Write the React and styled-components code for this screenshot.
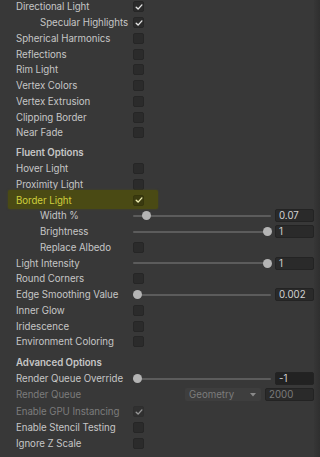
import React from "react";
import styled, { createGlobalStyle, css } from "styled-components";

const GlobalStyle = createGlobalStyle`
  html, body {
    margin: 0;
    padding: 0;
    background: #383838;
  }
  body {
    font-family: Inter, "Noto Sans", sans-serif;
    overflow: hidden;
  }
`;

const Window = styled.div`
  display: flex;
  width: 320px;
  height: 457px;
  overflow: hidden;
  background: #383838;
`;

const Panel = styled.div`
  flex: 1;
  display: flex;
  flex-direction: column;
  margin-top: -1px;
`;

const ScrollStrip = styled.div`
  width: 6px;
  background: linear-gradient(to right, #363636, #2f2f2f);
`;

const Row = styled.div`
  position: relative;
  display: grid;
  grid-template-columns: 125px 1fr;
  align-items: center;
  height: 15.75px;
  padding: 0 0 0 8px;
  margin-top: ${(p) => p.$gap || 0}px;
  ${(p) =>
    p.$highlight &&
    css`
      &::before {
        content: "";
        position: absolute;
        left: 8px;
        width: 150px;
        top: -2px;
        bottom: -1px;
        background: #4a4a14;
        border-radius: 2px;
        box-shadow: 0 0 2px #4a4a14;
      }
    `}
`;

const Label = styled.span`
  position: relative;
  padding-left: ${(p) => 8 + (p.$indent || 0) * 24}px;
  font-size: 9.7px;
  font-weight: ${(p) => (p.$bold ? 600 : 400)};
  color: ${(p) =>
    p.$disabled ? "#7c7c7c" : p.$highlight ? "#cfcf3c" : "#c6c6c6"};
  white-space: nowrap;
  letter-spacing: -0.05px;
`;

const Control = styled.div`
  position: relative;
  display: flex;
  align-items: center;
  gap: 4px;
`;

const Box = styled.div`
  width: 11px;
  height: 11px;
  box-sizing: border-box;
  border-radius: 2px;
  background: ${(p) => (p.$highlight ? "#3a3a10" : "#2b2b2b")};
  border: 1px solid ${(p) => (p.$highlight ? "#35350c" : "#262626")};
  display: flex;
  align-items: center;
  justify-content: center;
  opacity: ${(p) => (p.$disabled ? 0.55 : 1)};
`;

const Track = styled.div`
  position: relative;
  flex: 1;
  height: 2px;
  background: #5c5c5c;
  border-radius: 1px;
`;

const Thumb = styled.div`
  position: absolute;
  top: 50%;
  width: 9px;
  height: 9px;
  margin: -4.5px 0 0 -4.5px;
  border-radius: 50%;
  background: #b4b4b4;
`;

const NumField = styled.div`
  width: ${(p) => p.$width || 39}px;
  height: 13px;
  box-sizing: border-box;
  padding-left: 3px;
  border-radius: 2px;
  background: ${(p) => (p.$dark ? "#222" : "#2a2a2a")};
  border: 1px solid #232323;
  font-size: 9.7px;
  line-height: 11px;
  color: ${(p) => (p.$disabled ? "#7a7a7a" : "#d2d2d2")};
`;

const Dropdown = styled.div`
  width: 76px;
  height: 13px;
  box-sizing: border-box;
  margin-left: auto;
  padding: 0 5px 0 4px;
  display: flex;
  align-items: center;
  justify-content: space-between;
  border-radius: 2px;
  background: #3e3e3e;
  font-size: 9.7px;
  color: #7c7c7c;
`;

const Check = ({ color = "#e4e4e4" }) => (
  <svg width="8" height="8" viewBox="0 0 8 8">
    <path
      d="M1.2 4.3 L3.1 6.1 L6.9 1.9"
      fill="none"
      stroke={color}
      strokeWidth="1.4"
      strokeLinecap="round"
      strokeLinejoin="round"
    />
  </svg>
);

const CheckRow = ({ label, checked, indent, highlight, disabled, gap }) => (
  <Row $highlight={highlight} $gap={gap}>
    <Label $indent={indent} $highlight={highlight} $disabled={disabled}>
      {label}
    </Label>
    <Control>
      <Box $highlight={highlight} $disabled={disabled}>
        {checked && <Check color={highlight ? "#ececb0" : "#e4e4e4"} />}
      </Box>
    </Control>
  </Row>
);

const SliderRow = ({ label, value, pos, indent, dark }) => (
  <Row>
    <Label $indent={indent}>{label}</Label>
    <Control>
      <Track>
        <Thumb style={{ left: `calc(4px + ${pos} * (100% - 8px))` }} />
      </Track>
      <NumField $dark={dark}>{value}</NumField>
    </Control>
  </Row>
);

const Header = ({ children, gap }) => (
  <Row $gap={gap}>
    <Label $bold>{children}</Label>
  </Row>
);

const App = () => {
  return (
    <Window>
      <GlobalStyle />
      <Panel>
        <CheckRow label="Directional Light" checked />
        <CheckRow label="Specular Highlights" checked indent={1} />
        <CheckRow label="Spherical Harmonics" />
        <CheckRow label="Reflections" />
        <CheckRow label="Rim Light" />
        <CheckRow label="Vertex Colors" />
        <CheckRow label="Vertex Extrusion" />
        <CheckRow label="Clipping Border" />
        <CheckRow label="Near Fade" />

        <Header gap={4.25}>Fluent Options</Header>
        <CheckRow label="Hover Light" />
        <CheckRow label="Proximity Light" />
        <CheckRow label="Border Light" checked highlight />
        <SliderRow label="Width %" value="0.07" pos={0.07} indent={1} />
        <SliderRow label="Brightness" value="1" pos={1} indent={1} />
        <CheckRow label="Replace Albedo" indent={1} />
        <SliderRow label="Light Intensity" value="1" pos={1} />
        <CheckRow label="Round Corners" />
        <SliderRow label="Edge Smoothing Value" value="0.002" pos={0.002} />
        <CheckRow label="Inner Glow" />
        <CheckRow label="Iridescence" />
        <CheckRow label="Environment Coloring" />

        <Header gap={5.25}>Advanced Options</Header>
        <SliderRow label="Render Queue Override" value="-1" pos={0} dark />
        <Row $gap={0.5}>
          <Label $disabled>Render Queue</Label>
          <Control>
            <Dropdown>
              Geometry
              <svg width="6" height="4" viewBox="0 0 6 4">
                <path d="M0 0 H6 L3 3.5 Z" fill="#8a8a8a" />
              </svg>
            </Dropdown>
            <NumField $width={49} $disabled>
              2000
            </NumField>
          </Control>
        </Row>
        <CheckRow label="Enable GPU Instancing" checked disabled gap={1} />
        <CheckRow label="Enable Stencil Testing" />
        <CheckRow label="Ignore Z Scale" />
      </Panel>
      <ScrollStrip />
    </Window>
  );
};

export default App;
